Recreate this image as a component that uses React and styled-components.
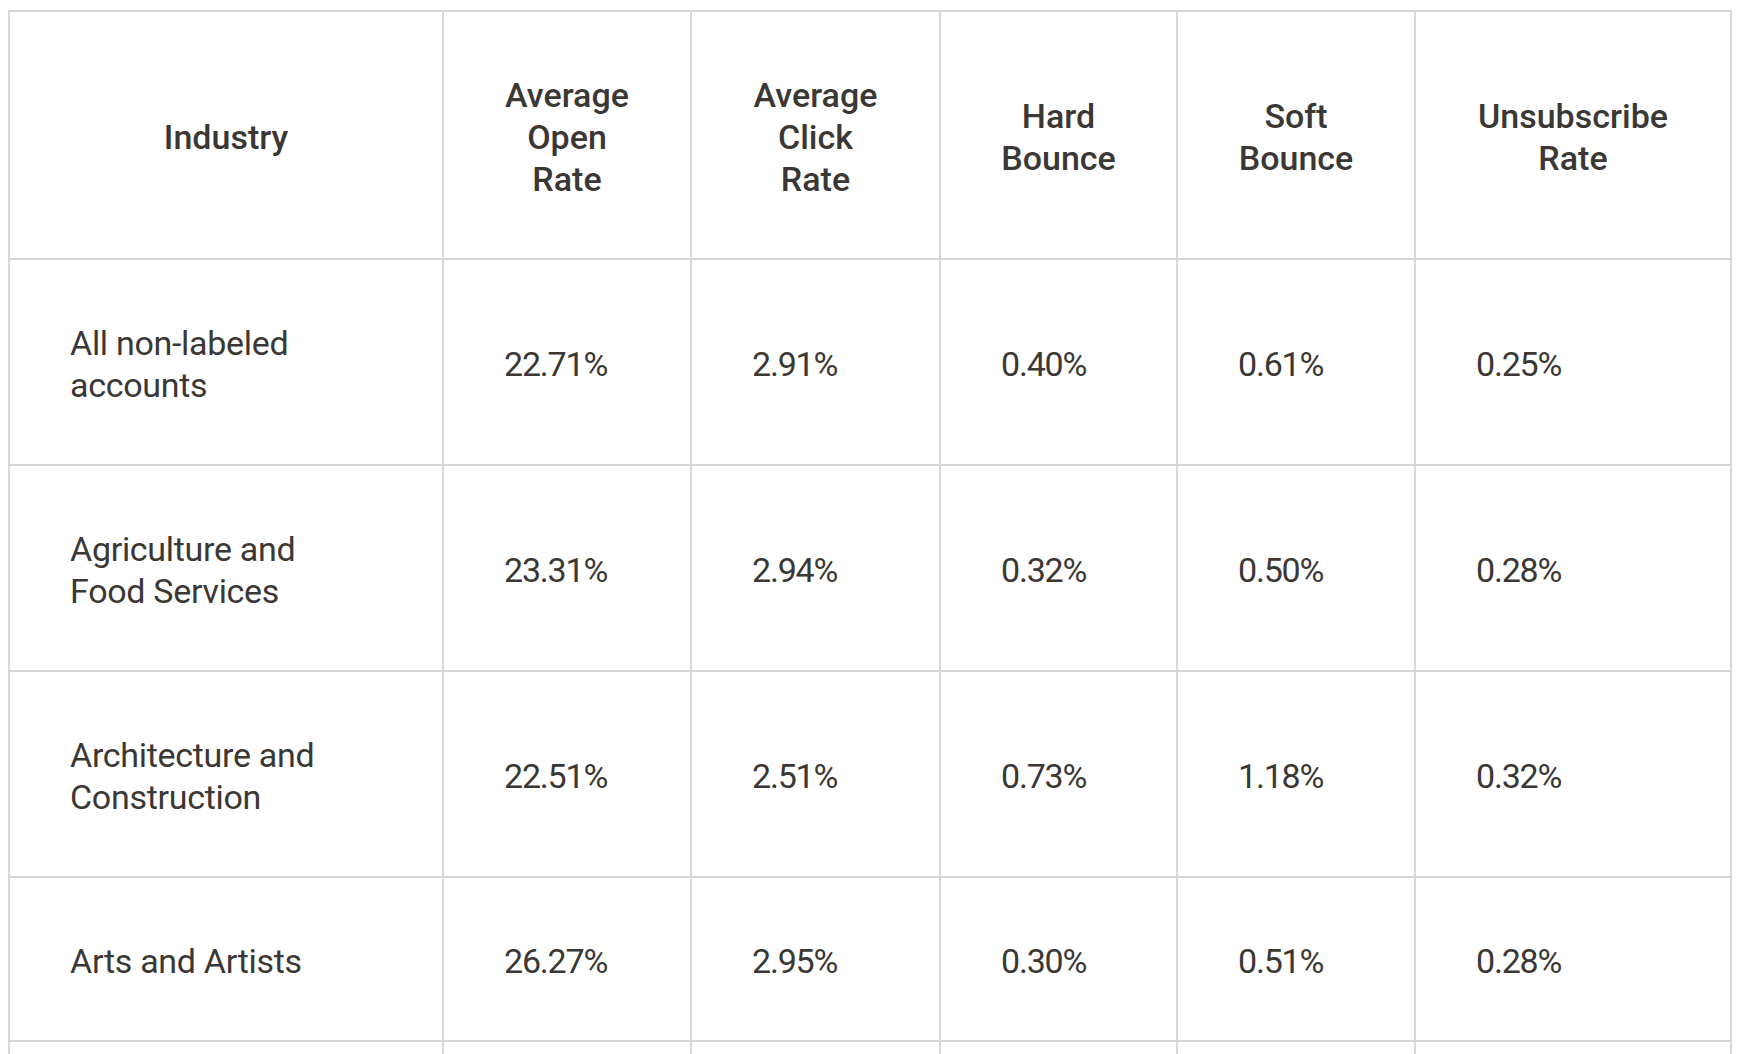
import React from 'react';
import styled, {createGlobalStyle} from 'styled-components';

const GlobalStyle = createGlobalStyle`
  body {
    margin: 8px;
    background: #fff;
    font-family: Roboto, "Liberation Sans", sans-serif;
    color: #3b3735;
  }
`

const Table = styled.table`
  width: 1724px;
  margin-top: 2px;
  table-layout: fixed;
  border-collapse: separate;
  border-spacing: 0;
  border-top: 2px solid #d9d8d4;
  border-left: 2px solid #d9d8d4;
  font-size: 34px;
  line-height: 42px;
`

const HeadCell = styled.th`
  box-sizing: border-box;
  width: ${props => props.$width}px;
  padding: 62px 60px 58px;
  border-right: 2px solid #d9d8d4;
  border-bottom: 2px solid #d9d8d4;
  font-weight: 500;
  text-align: center;
  vertical-align: middle;
  color: #3b3735;
`

const Cell = styled.td`
  box-sizing: border-box;
  padding: ${props => props.$label ? '62px 90px 58px 60px' : '62px 60px 58px'};
  border-right: 2px solid #d9d8d4;
  border-bottom: 2px solid #d9d8d4;
  font-weight: 400;
  text-align: left;
  vertical-align: middle;
  letter-spacing: ${props => props.$label ? '-0.3px' : '-1.2px'};
`

const columns = [
    {title: 'Industry', width: 434},
    {title: 'Average Open Rate', width: 248},
    {title: 'Average Click Rate', width: 249},
    {title: 'Hard Bounce', width: 237},
    {title: 'Soft Bounce', width: 238},
    {title: 'Unsubscribe Rate', width: 316},
]

const rows = [
    ['All non-labeled accounts', '22.71%', '2.91%', '0.40%', '0.61%', '0.25%'],
    ['Agriculture and Food Services', '23.31%', '2.94%', '0.32%', '0.50%', '0.28%'],
    ['Architecture and Construction', '22.51%', '2.51%', '0.73%', '1.18%', '0.32%'],
    ['Arts and Artists', '26.27%', '2.95%', '0.30%', '0.51%', '0.28%'],
    ['Beauty and Personal Care', '16.65%', '1.92%', '0.28%', '0.35%', '0.31%'],
]

function App() {
    return (
        <>
            <GlobalStyle/>
            <Table>
                <thead>
                <tr>
                    {columns.map(col => (
                        <HeadCell key={col.title} $width={col.width}>{col.title}</HeadCell>
                    ))}
                </tr>
                </thead>
                <tbody>
                {rows.map(row => (
                    <tr key={row[0]}>
                        {row.map((value, i) => (
                            <Cell key={i} $label={i === 0}>{value}</Cell>
                        ))}
                    </tr>
                ))}
                </tbody>
            </Table>
        </>
    );
}

export default App;
